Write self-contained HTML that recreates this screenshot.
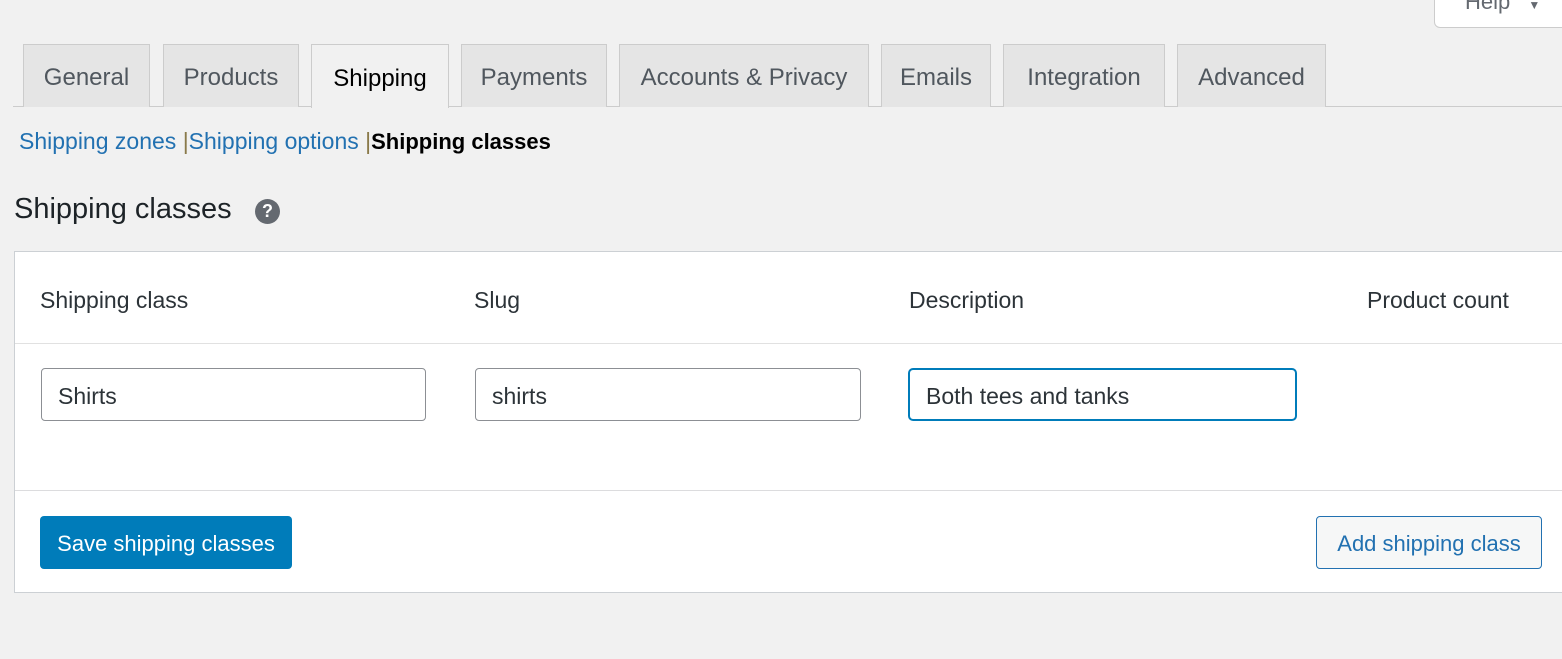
<!DOCTYPE html>
<html><head><style>
*{box-sizing:border-box;margin:0;padding:0}
body{width:1562px;height:659px;background:#f1f1f1;font-family:"Liberation Sans",sans-serif;position:relative;overflow:hidden;color:#1d2327}
.a{position:absolute}
.tab{position:absolute;top:44px;height:63px;background:#e5e5e5;border:1px solid #ccc;border-bottom:none;font-size:24px;color:#50575e;display:flex;align-items:center;justify-content:center;padding-top:4px}
.tab.on{background:#f1f1f1;color:#000;height:64px}
.inp{position:absolute;top:368px;height:53px;background:#fff;border:1px solid #8c8f94;border-radius:4px;font-size:23px;padding-left:16px;display:flex;align-items:center;color:#2c3338;padding-top:3px}
.th{position:absolute;top:287px;font-size:23px;color:#2c3338}
</style></head><body>
<div class="a" style="left:1434px;top:-10px;width:140px;height:38px;background:#fff;border:1px solid #ccc;border-radius:0 0 0 6px;font-size:22px;color:#646970;padding-left:30px;line-height:22px">Help <span style="font-size:12px;margin-left:12px">▼</span></div>
<div class="a" style="left:13px;top:106px;width:1549px;height:1px;background:#ccc"></div>
<div class="tab" style="left:23px;width:127px">General</div>
<div class="tab" style="left:163px;width:136px">Products</div>
<div class="tab on" style="left:311px;width:138px">Shipping</div>
<div class="tab" style="left:461px;width:146px">Payments</div>
<div class="tab" style="left:619px;width:250px">Accounts &amp; Privacy</div>
<div class="tab" style="left:881px;width:110px">Emails</div>
<div class="tab" style="left:1003px;width:162px">Integration</div>
<div class="tab" style="left:1177px;width:149px">Advanced</div>
<div class="a" style="left:19px;top:128px;font-size:23px;color:#2271b1;white-space:nowrap">Shipping zones <span style="color:#8a7a4a">|</span>Shipping options <span style="color:#8a7a4a">|</span><span style="color:#000;font-weight:bold;font-size:22px">Shipping classes</span></div>
<div class="a" style="left:14px;top:193px;font-size:29px;color:#1d2327;font-weight:500">Shipping classes</div>
<div class="a" style="left:255px;top:199px;width:25px;height:25px;border-radius:50%;background:#646970;color:#fff;font-weight:bold;font-size:18px;text-align:center;line-height:25px">?</div>
<div class="a" style="left:14px;top:251px;width:1560px;height:342px;background:#fff;border:1px solid #ccd0d4"></div>
<div class="a" style="left:15px;top:343px;width:1547px;height:1px;background:#e1e1e1"></div>
<div class="a" style="left:15px;top:490px;width:1547px;height:1px;background:#dcdcde"></div>
<div class="th" style="left:40px">Shipping class</div>
<div class="th" style="left:474px">Slug</div>
<div class="th" style="left:909px">Description</div>
<div class="th" style="left:1367px">Product count</div>
<div class="inp" style="left:41px;width:385px">Shirts</div>
<div class="inp" style="left:475px;width:386px">shirts</div>
<div class="inp" style="left:908px;width:389px;border:2px solid #007cba;border-radius:5px">Both tees and tanks</div>
<div class="a" style="left:40px;top:516px;width:252px;height:53px;background:#007cba;border-radius:4px;color:#fff;font-size:22px;display:flex;align-items:center;justify-content:center;padding-top:3px">Save shipping classes</div>
<div class="a" style="left:1316px;top:516px;width:226px;height:53px;background:#f6f7f7;border:1px solid #2271b1;border-radius:4px;color:#2271b1;font-size:22px;display:flex;align-items:center;justify-content:center;padding-top:3px">Add shipping class</div>
</body></html>
